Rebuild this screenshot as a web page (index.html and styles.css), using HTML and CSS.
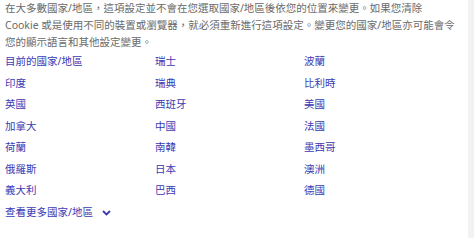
FILE: index.html
```html
<!DOCTYPE html>
<html lang="zh-Hant">
<head>
<meta charset="utf-8">
<link rel="stylesheet" href="styles.css">
</head>
<body>
<div class="page">
  <main class="content">
    <p class="intro">在大多數國家/地區，這項設定並不會在您選取國家/地區後依您的位置來變更。如果您清除<br>Cookie 或是使用不同的裝置或瀏覽器，就必須重新進行這項設定。變更您的國家/地區亦可能會令<br>您的顯示語言和其他設定變更。</p>
    <ul class="countries">
      <li><a href="#">目前的國家/地區</a></li>
      <li><a href="#">瑞士</a></li>
      <li><a href="#">波蘭</a></li>
      <li><a href="#">印度</a></li>
      <li><a href="#">瑞典</a></li>
      <li><a href="#">比利時</a></li>
      <li><a href="#">英國</a></li>
      <li><a href="#">西班牙</a></li>
      <li><a href="#">美國</a></li>
      <li><a href="#">加拿大</a></li>
      <li><a href="#">中國</a></li>
      <li><a href="#">法國</a></li>
      <li><a href="#">荷蘭</a></li>
      <li><a href="#">南韓</a></li>
      <li><a href="#">墨西哥</a></li>
      <li><a href="#">俄羅斯</a></li>
      <li><a href="#">日本</a></li>
      <li><a href="#">澳洲</a></li>
      <li><a href="#">義大利</a></li>
      <li><a href="#">巴西</a></li>
      <li><a href="#">德國</a></li>
    </ul>
    <a class="more" href="#">查看更多國家/地區<svg class="chev" width="9" height="6" viewBox="0 0 9 6"><path d="M1 1 L4.5 4.5 L8 1" fill="none" stroke="currentColor" stroke-width="1.8"/></svg></a>
  </main>
  <div class="track"></div>
</div>
</body>
</html>
```

FILE: styles.css
```css
html, body {
  margin: 0;
  padding: 0;
  background: #fff;
}
.page {
  display: flex;
  width: 474px;
  height: 238px;
  overflow: hidden;
}
.content {
  flex: 1;
  padding-left: 5px;
  font-family: "Noto Sans", "Noto Sans CJK TC", sans-serif;
  font-size: 10.5px;
}
.intro {
  margin: 0;
  line-height: 17px;
  color: #6a6a6a;
  white-space: nowrap;
}
.countries {
  list-style: none;
  margin: 0;
  padding: 0;
  display: grid;
  grid-template-columns: 150px 149px 1fr;
}
.countries li {
  line-height: 21.5px;
  height: 21.5px;
}
.countries a, .more {
  color: #3a3ab4;
  text-decoration: none;
}
.more {
  display: flex;
  align-items: center;
  height: 21.5px;
  line-height: 21.5px;
}
.chev {
  margin-left: 9px;
  margin-top: 1px;
}
.track {
  width: 6px;
  background: #f2f2f2;
}
```
